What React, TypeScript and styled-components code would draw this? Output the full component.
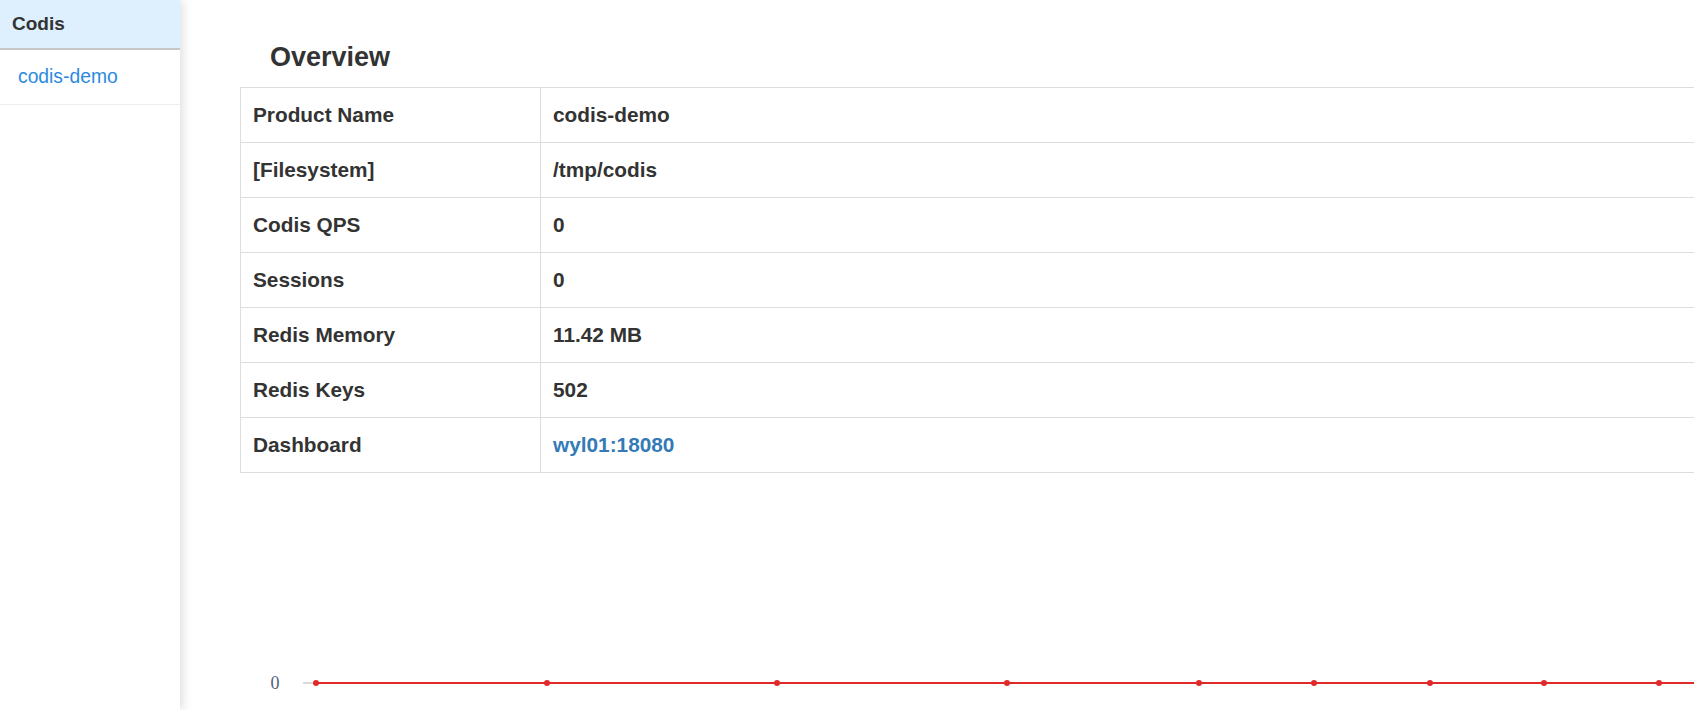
import React from "react";
import styled, { createGlobalStyle } from "styled-components";

const Global = createGlobalStyle`
  html, body { margin: 0; padding: 0; background: #fff; overflow: hidden; }
  body { font-family: "Liberation Sans", Arial, sans-serif; color: #333; }
`;

const Page = styled.div`
  display: flex;
  width: 1694px;
  height: 710px;
  overflow: hidden;
`;

const Sidebar = styled.nav`
  flex: 0 0 180px;
  width: 180px;
  height: 100%;
  background: #fff;
  box-shadow: 3px 0 9px rgba(0, 0, 0, 0.12);
  position: relative;
  z-index: 1;
`;

const SideHeader = styled.div`
  height: 48px;
  display: flex;
  align-items: center;
  padding-left: 12px;
  background: #def0fe;
  border-bottom: 2px solid #c8c8c8;
  font-size: 19px;
  font-weight: bold;
  color: #333;
`;

const SideItem = styled.a`
  display: flex;
  align-items: center;
  height: 54px;
  padding-left: 18px;
  border-bottom: 1px solid #eee;
  font-size: 19.3px;
  color: #2a8ae0;
  text-decoration: none;
`;

const Main = styled.main`
  flex: 1;
  min-width: 0;
  padding-left: 60px;
  overflow: hidden;
`;

const Title = styled.h3`
  margin: 43px 0 14px 30px;
  font-size: 27px;
  line-height: 1.1;
  font-weight: bold;
  color: #333;
`;

const Table = styled.table`
  width: 1520px;
  border-collapse: collapse;
  font-size: 20.8px;
  font-weight: bold;
  color: #333;
`;

const Cell = styled.td<{ $first?: boolean }>`
  border: 1px solid #ddd;
  height: 55px;
  padding: 0 12px;
  box-sizing: border-box;
  width: ${(p) => (p.$first ? "300px" : "auto")};
  vertical-align: middle;
  line-height: 1.43;
`;

const Link = styled.a`
  color: #337ab7;
  text-decoration: none;
`;

const ChartBox = styled.div`
  width: 1454px;
  height: 240px;
`;

const rows: [string, React.ReactNode][] = [
  ["Product Name", "codis-demo"],
  ["[Filesystem]", "/tmp/codis"],
  ["Codis QPS", "0"],
  ["Sessions", "0"],
  ["Redis Memory", "11.42 MB"],
  ["Redis Keys", "502"],
  ["Dashboard", <Link href="#">wyl01:18080</Link>],
];

const dots = [316, 547, 777, 1007, 1199, 1314, 1430, 1544, 1659];

function Chart() {
  const ox = 240;
  const y = 210;
  return (
    <ChartBox>
      <svg width="1454" height="240" viewBox="0 0 1454 240">
        <text
          x={275 - ox}
          y={y + 6}
          textAnchor="middle"
          fontFamily="'Liberation Serif', serif"
          fontSize="18"
          fill="#55607a"
        >
          0
        </text>
        <line x1={303 - ox} y1={y} x2={316 - ox} y2={y} stroke="#ccc" strokeWidth="1.5" />
        <line x1={316 - ox} y1={y} x2={1454} y2={y} stroke="#e02a2a" strokeWidth="2.2" />
        {dots.map((d) => (
          <circle key={d} cx={d - ox} cy={y} r="3" fill="#e02a2a" />
        ))}
      </svg>
    </ChartBox>
  );
}

export default function App() {
  return (
    <>
      <Global />
      <Page>
        <Sidebar>
          <SideHeader>Codis</SideHeader>
          <SideItem href="#">codis-demo</SideItem>
        </Sidebar>
        <Main>
          <Title>Overview</Title>
          <Table>
            <tbody>
              {rows.map(([k, v]) => (
                <tr key={k}>
                  <Cell $first>{k}</Cell>
                  <Cell>{v}</Cell>
                </tr>
              ))}
            </tbody>
          </Table>
          <Chart />
        </Main>
      </Page>
    </>
  );
}
